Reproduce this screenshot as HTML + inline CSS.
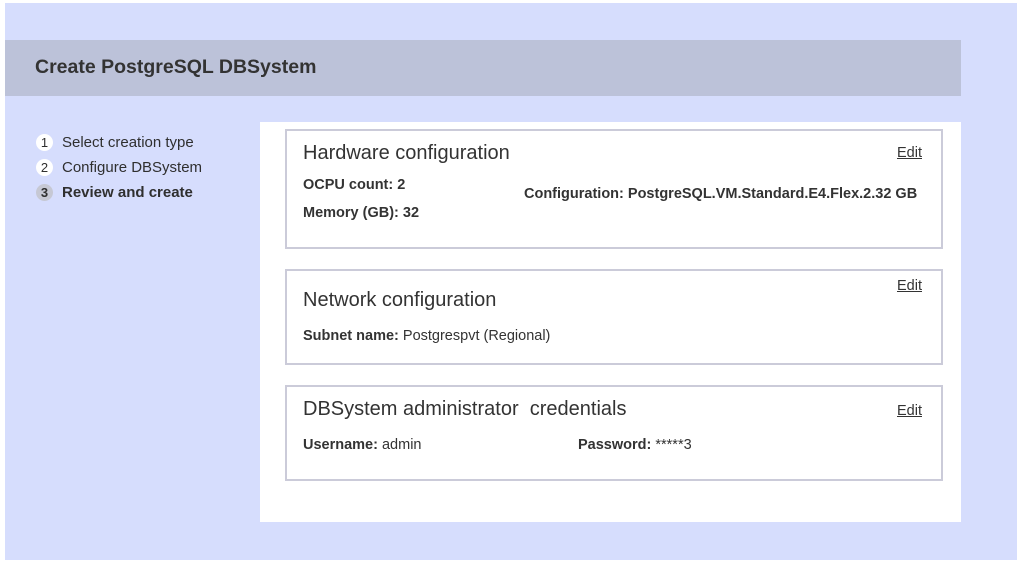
<!DOCTYPE html>
<html><head><style>
html,body{margin:0;padding:0;width:1024px;height:565px;background:#fff;overflow:hidden;font-family:"Liberation Sans","DejaVu Sans",sans-serif;color:#2f2f2f}
.bg{position:absolute;left:5px;top:3px;width:1012px;height:557px;background:#d6ddfd}
.hdr{position:absolute;left:5px;top:40px;width:956px;height:56px;background:#bcc2d9}
.hdr h1{margin:0;position:absolute;left:30px;top:16px;font-size:19.5px;font-weight:bold;color:#333}
.steps{position:absolute;left:36px;top:130px;font-size:15px}
.step{height:25px;display:flex;align-items:center}
.num{width:17px;height:17px;border-radius:50%;background:#fff;display:inline-flex;align-items:center;justify-content:center;font-size:13px;margin-right:9px}
.panel{position:absolute;left:260px;top:122px;width:701px;height:400px;background:#fff}
.card{position:absolute;left:285px;width:654px;border:2px solid #cbcbd9;background:#fff}
.card h2{position:absolute;margin:0;left:16px;font-size:20px;font-weight:normal;color:#333}
.edit{position:absolute;right:19px;font-size:14.5px;text-decoration:underline;color:#333}
.t{position:absolute;font-size:14.5px;color:#333}
b{font-weight:bold}
</style></head><body>
<div class="bg"></div>
<div class="hdr"><h1>Create PostgreSQL DBSystem</h1></div>
<div class="steps">
<div class="step"><span class="num">1</span>Select creation type</div>
<div class="step"><span class="num">2</span>Configure DBSystem</div>
<div class="step" style="font-weight:bold"><span class="num" style="background:#c6c8d4">3</span>Review and create</div>
</div>
<div class="panel"></div>
<div class="card" style="top:129px;height:116px">
<h2 style="top:11px">Hardware configuration</h2>
<span class="edit" style="top:14px">Edit</span>
<span class="t" style="left:16px;top:46px"><b>OCPU count: 2</b></span>
<span class="t" style="left:16px;top:74px"><b>Memory (GB): 32</b></span>
<span class="t" style="left:237px;top:55px"><b>Configuration: PostgreSQL.VM.Standard.E4.Flex.2.32 GB</b></span>
</div>
<div class="card" style="top:269px;height:92px">
<h2 style="top:18px">Network configuration</h2>
<span class="edit" style="top:7px">Edit</span>
<span class="t" style="left:16px;top:57px"><b>Subnet name:</b> Postgrespvt (Regional)</span>
</div>
<div class="card" style="top:385px;height:92px">
<h2 style="top:11px">DBSystem administrator&nbsp; credentials</h2>
<span class="edit" style="top:16px">Edit</span>
<span class="t" style="left:16px;top:50px"><b>Username:</b> admin</span>
<span class="t" style="left:291px;top:50px"><b>Password:</b> *****3</span>
</div>
</body></html>
